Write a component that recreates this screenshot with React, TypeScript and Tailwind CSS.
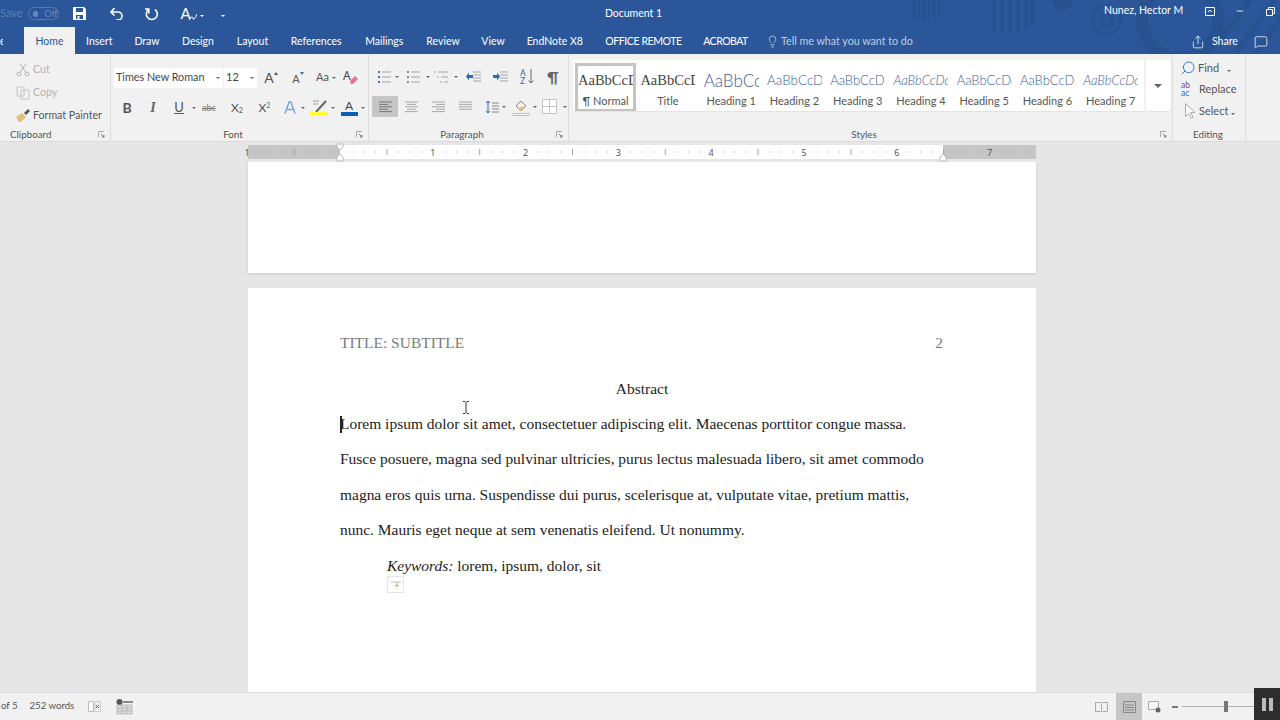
import type { ReactNode } from "react"
import { Lightbulb, MessageSquare, Share, Search, Minus } from "lucide-react"

const tabs = [
  { name: "Insert", cls: "w-[48.500px]" },
  { name: "Draw", cls: "w-[47px]" },
  { name: "Design", cls: "w-[55px]" },
  { name: "Layout", cls: "w-[54px]" },
  { name: "References", cls: "w-[73.500px]" },
  { name: "Mailings", cls: "w-[62.500px]" },
  { name: "Review", cls: "w-[55px]" },
  { name: "View", cls: "w-[45px]" },
  { name: "EndNote X8", cls: "w-[78.500px]" },
  { name: "OFFICE REMOTE", cls: "w-[99px] tracking-[-0.4px]" },
  { name: "ACROBAT", cls: "w-[65px] tracking-[-0.5px]" },
]

const gallery = [
  { label: "Title", sample: "AaBbCcDdEe", cls: "font-['Liberation_Serif',serif] text-[14.500px] text-[#444]" },
  { label: "Heading 1", sample: "AaBbCcDd", cls: "text-[17px] font-light text-[#3a6098]" },
  { label: "Heading 2", sample: "AaBbCcDdEe", cls: "text-[13.500px] font-light text-[#3a6098]" },
  { label: "Heading 3", sample: "AaBbCcDdEe", cls: "text-[13px] font-light text-[#3f6290]" },
  { label: "Heading 4", sample: "AaBbCcDdEe", cls: "text-[13px] font-light italic text-[#3f6290]" },
  { label: "Heading 5", sample: "AaBbCcDdEe", cls: "text-[13px] font-light text-[#3f6290]" },
  { label: "Heading 6", sample: "AaBbCcDdEe", cls: "text-[13px] font-light text-[#3f6290]" },
  { label: "Heading 7", sample: "AaBbCcDdEe", cls: "text-[13px] font-light italic text-[#3f6290]" },
]

function Caret({ color = "border-t-[#666]" }: { color?: string }) {
  return <span className={`inline-block w-0 h-0 border-x-[2px] border-x-transparent border-t-[2px] ${color}`} />
}

// fixed width slot so the ribbon icons keep their spacing
function Slot({ w, children }: { w: string; children: ReactNode }) {
  return <div className={`${w} h-[21px] flex items-center justify-center shrink-0`}>{children}</div>
}

function Launcher() {
  return (
    <svg width="7" height="7" viewBox="0 0 7 7" className="absolute right-[5px] bottom-[3px]">
      <path d="M.5 6V.5H6" fill="none" stroke="#aaa" />
      <path d="M3 3l3 3M6 4v2H4" fill="none" stroke="#777" />
    </svg>
  )
}

function GroupLabel({ children, inset = "pr-[13px]" }: { children: ReactNode; inset?: string }) {
  return <div className={`absolute left-0 right-0 bottom-0 text-center text-[9.800px] leading-[13px] text-[#555] ${inset}`}>{children}</div>
}

function Lines({ kind }: { kind: "left" | "center" | "right" | "justify" }) {
  const rows = {
    left: [[0, 13], [0, 9], [0, 13], [0, 9], [0, 13]],
    center: [[0, 13], [2, 11], [0, 13], [2, 11], [0, 13]],
    right: [[0, 13], [4, 13], [0, 13], [4, 13], [0, 13]],
    justify: [[0, 13], [0, 13], [0, 13], [0, 13]],
  }[kind]
  return (
    <svg width="13" height="12" viewBox="0 0 13 12">
      {rows.map((r, i) => (
        <rect key={i} x={r[0]} y={i * 2.4 + 0.5} width={r[1] - r[0]} height="1" fill={kind === "left" ? "#777" : "#a8a8a8"} />
      ))}
    </svg>
  )
}

function ListIcon({ numbered }: { numbered?: boolean }) {
  return (
    <svg width="14" height="14" viewBox="0 0 14 14">
      {[2, 7, 12].map((y) => (
        <g key={y}>
          <rect x="1" y={y - 1} width="2" height="2" fill={numbered ? "#888" : "#3f6fb0"} />
          <rect x="5" y={y - 0.5} width="9" height="1" fill="#a5a5a5" />
        </g>
      ))}
    </svg>
  )
}

function IndentIcon({ flip }: { flip?: boolean }) {
  return (
    <svg width="15" height="11" viewBox="0 0 15 11">
      <path d="M7 1h8M7 4h8M7 7h8M7 10h8" stroke="#a5a5a5" />
      {flip ? <path d="M0 4h4V1.500L7 5.500 4 9.500V7H0z" fill="#2b6cb8" /> : <path d="M7 4H3V1.500L0 5.500l3 4V7h4z" fill="#2b6cb8" />}
    </svg>
  )
}

function RibbonFont() {
  return (
    <div className="relative w-[258px] shrink-0 h-full border-r border-[#dcdcdc] pt-[13px] pl-[3px] flex flex-col">
      <div className="flex items-center">
        <div className="w-[109px] h-[20px] bg-white flex items-center justify-between pl-[2px] pr-[3px] text-[10.800px] text-[#444]">
          <span>Times New Roman</span>
          <Caret />
        </div>
        <div className="w-[33px] h-[20px] ml-px bg-white flex items-center justify-between pl-[2px] pr-[3px] text-[11px] text-[#444]">
          <span>12</span>
          <Caret />
        </div>
        <Slot w="w-[26px] ml-[1px]">
          <span className="text-[14px] text-[#555]">A</span>
          <span className="w-0 h-0 mb-[9px] border-x-[2px] border-x-transparent border-b-[3px] border-b-[#555]" />
        </Slot>
        <Slot w="w-[28px]">
          <span className="text-[11px] text-[#555] mt-[3px]">A</span>
          <span className="w-0 h-0 mb-[9px] border-x-[2px] border-x-transparent border-t-[3px] border-t-[#3f6fb0]" />
        </Slot>
        <Slot w="w-[26px] gap-[3px] ml-[1px]">
          <span className="text-[11px] text-[#555]">Aa</span>
          <Caret />
        </Slot>
        <Slot w="w-[24px]">
          <svg width="16" height="17" viewBox="0 0 16 17">
            <text x="0" y="11" fontSize="12" fill="#444" fontFamily="Noto Sans">A</text>
            <path d="M7 12l5-5 3 3-5 5H8z" fill="#e0758d" />
          </svg>
        </Slot>
      </div>
      <div className="flex items-center mt-[9px]">
        <Slot w="w-[26px]"><span className="text-[14px] font-bold text-[#555]">B</span></Slot>
        <Slot w="w-[26px]"><span className="text-[14px] font-['Liberation_Serif',serif] font-bold italic text-[#666]">I</span></Slot>
        <Slot w="w-[26px]"><span className="text-[13px] underline text-[#555]">U</span></Slot>
        <Slot w="w-[3px]"><Caret /></Slot>
        <Slot w="w-[28px]"><span className="text-[9px] line-through text-[#777]">abc</span></Slot>
        <Slot w="w-[28px]"><span className="text-[12px] text-[#555]">X<sub className="text-[7px]">2</sub></span></Slot>
        <Slot w="w-[27px]"><span className="text-[12px] text-[#555]">X<sup className="text-[7px] text-[#3f6fb0]">2</sup></span></Slot>
        <Slot w="w-[24px]">
          <svg width="12" height="13" viewBox="0 0 12 13"><path d="M1 12.500L5 1h2l4 11.500M3 8.500h6" fill="none" stroke="#7aa5dc" strokeWidth="1.500" /></svg>
        </Slot>
        <Slot w="w-[2px]"><Caret /></Slot>
        <Slot w="w-[26px] ml-[2px]">
          <div className="flex flex-col items-center">
            <svg width="15" height="12" viewBox="0 0 15 12"><path d="M4 12l10-11" stroke="#666" strokeWidth="2" /><path d="M1 1h6M1 4h5" stroke="#999" /></svg>
            <div className="w-[18px] h-[4px] bg-[#ffff33]" />
          </div>
        </Slot>
        <Slot w="w-[1px]"><Caret /></Slot>
        <Slot w="w-[26px] ml-[3px]">
          <div className="flex flex-col items-center">
            <span className="text-[12px] leading-[12px] text-[#444]">A</span>
            <div className="w-[17px] h-[4px] bg-[#0a5fb0]" />
          </div>
        </Slot>
        <Slot w="w-[1px]"><Caret /></Slot>
      </div>
      <GroupLabel>Font</GroupLabel>
      <Launcher />
    </div>
  )
}

function RibbonParagraph() {
  return (
    <div className="relative w-[200px] shrink-0 h-full border-r border-[#dcdcdc] pt-[12px] flex flex-col">
      <div className="flex items-center pl-[6px] h-[21px]">
        <Slot w="w-[18px]"><ListIcon /></Slot>
        <Slot w="w-[8px]"><Caret /></Slot>
        <Slot w="w-[22px] ml-px"><ListIcon numbered /></Slot>
        <Slot w="w-[7px]"><Caret /></Slot>
        <Slot w="w-[20px]">
          <svg width="14" height="14" viewBox="0 0 14 14"><path d="M0 2h2M4 2h10M3 7h2M7 7h7M6 12h2M10 12h4" stroke="#a5a5a5" /></svg>
        </Slot>
        <Slot w="w-[9px]"><Caret /></Slot>
        <Slot w="w-[26px]"><IndentIcon /></Slot>
        <Slot w="w-[28px]"><IndentIcon flip /></Slot>
        <Slot w="w-[26px]">
          <svg width="15" height="17" viewBox="0 0 15 17">
            <text x="0" y="8" fontSize="9" fill="#2b6cb8" fontFamily="Noto Sans">A</text>
            <text x="0" y="16" fontSize="9" fill="#2b6cb8" fontFamily="Noto Sans">Z</text>
            <path d="M11 1v14M8.500 12.500L11 15l2.500-2.500" fill="none" stroke="#666" />
          </svg>
        </Slot>
        <Slot w="w-[26px]"><span className="text-[16px] font-bold text-[#666]">¶</span></Slot>
      </div>
      <div className="flex items-center mt-[9px] h-[21px] pl-[3px]">
        <Slot w="w-[26px] !h-[21px] bg-[#c6c6c6]"><Lines kind="left" /></Slot>
        <Slot w="w-[27px]"><Lines kind="center" /></Slot>
        <Slot w="w-[27px]"><Lines kind="right" /></Slot>
        <Slot w="w-[27px]"><Lines kind="justify" /></Slot>
        <Slot w="w-[22px] ml-[2px]">
          <svg width="14" height="14" viewBox="0 0 14 14"><path d="M3 1v12M1 3l2-2 2 2M1 11l2 2 2-2" fill="none" stroke="#2b6cb8" /><path d="M7 3h7M7 6h7M7 9h7M7 12h7" stroke="#888" /></svg>
        </Slot>
        <Slot w="w-[1px]"><Caret /></Slot>
        <Slot w="w-[26px] ml-[4px]">
          <svg width="18" height="18" viewBox="0 0 18 18"><path d="M4 8l5-5 5 5-5 5z" fill="none" stroke="#888" /><path d="M9 9l5-1-5 5-3-3z" fill="#e8c07a" /><rect x="1" y="15.500" width="16" height="2" fill="#fff" stroke="#bbb" /></svg>
        </Slot>
        <Slot w="w-[1px]"><Caret /></Slot>
        <Slot w="w-[29px]">
          <svg width="15" height="15" viewBox="0 0 15 15"><path d="M.5.500h14v14H.5zM7.500.5v14M.5 7.500h14" fill="#fff" stroke="#c4c4c4" /></svg>
        </Slot>
        <Slot w="w-[1px]"><Caret /></Slot>
      </div>
      <GroupLabel>Paragraph</GroupLabel>
      <Launcher />
    </div>
  )
}

function RibbonStyles() {
  return (
    <div className="relative w-[604px] shrink-0 h-full border-r border-[#dcdcdc] pt-[6px] pl-[4px]">
      <div className="flex h-[52px] gap-[2px]">
        <div className="w-[571px] h-[52px] bg-white border-b border-[#e4e4e4] flex overflow-hidden">
          <div className="ml-[2px] mt-[3px] w-[61.250px] h-[49px] shrink-0 border-[3px] border-[#c4c4c4] flex flex-col items-center overflow-hidden">
            <div className="w-full overflow-hidden whitespace-nowrap text-center h-[28px] leading-[28px] font-['Liberation_Serif',serif] text-[14.500px] text-[#444]">AaBbCcDdEe</div>
            <div className="text-[11px] leading-[14px] text-[#555]">¶ Normal</div>
          </div>
          {gallery.map((g) => (
            <div key={g.label} className="w-[63.250px] shrink-0 flex flex-col items-center pt-[7px] overflow-hidden">
              <div className={`w-[55px] overflow-hidden whitespace-nowrap h-[27px] leading-[27px] ${g.cls}`}>{g.sample}</div>
              <div className="text-[11px] leading-[14px] text-[#555]">{g.label}</div>
            </div>
          ))}
        </div>
        <div className="w-[24px] h-[52px] bg-white border-b border-[#e4e4e4] flex items-center justify-center">
          <span className="w-0 h-0 border-x-[4px] border-x-transparent border-t-[4px] border-t-[#666]" />
        </div>
      </div>
      <GroupLabel>Styles</GroupLabel>
      <Launcher />
    </div>
  )
}

function RibbonEditing() {
  return (
    <div className="relative w-[73px] shrink-0 h-full border-r border-[#dcdcdc] pt-[3px] text-[11px] text-[#555]">
      <div className="flex items-center h-[22px] pl-[7px]">
        <Search size={16} strokeWidth={1.500} color="#3f78c0" className="-scale-x-100" />
        <span className="ml-[2px]">Find</span>
        <span className="ml-[8px]"><Caret /></span>
      </div>
      <div className="flex items-center h-[22px] -mt-[1px] pl-[8px]">
        <div className="w-[15px] flex flex-col text-[8.500px] leading-[8px] text-[#6a4a9c]">
          <span>ab</span>
          <span className="text-[#2b6cb8] -mr-[3px]">ac</span>
        </div>
        <span className="ml-[3px]">Replace</span>
      </div>
      <div className="flex items-center h-[22px] pl-[12px]">
        <svg width="11" height="16" viewBox="0 0 11 16"><path d="M.5.500v13l3-3 2.500 5 2-1-2.500-5h4.500z" fill="#fff" stroke="#aaa" /></svg>
        <span className="ml-[3px]">Select</span>
        <span className="ml-[3px]"><Caret /></span>
      </div>
      <GroupLabel inset="pr-[2px]">Editing</GroupLabel>
    </div>
  )
}

function Ruler() {
  const ticks = []
  for (let i = -7; i < 60; i++) {
    const x = 92 + (i * 92.8) / 8
    if (i % 8 === 0) continue
    ticks.push(<rect key={i} x={x} y={i % 4 === 0 ? 4 : 6.500} width="1" height={i % 4 === 0 ? 6 : 1} fill="#a0a0a0" />)
  }
  return (
    <div className="h-[20px] shrink-0 bg-[#e6e6e6] pt-[3px] pl-[248px]">
      <div className="relative w-[788px] h-[14px] flex">
        <div className="w-[92px] bg-[#c6c6c6]" />
        <div className="w-[603px] bg-white" />
        <div className="w-[93px] bg-[#c6c6c6]" />
        <svg width="800" height="20" viewBox="0 0 800 20" className="absolute left-[-4px] top-0 overflow-visible">
          <g transform="translate(4 0)">
            {ticks}
            {["1", "1", "2", "3", "4", "5", "6", "7"].map((n, i) => (
              <text key={i} x={i === 0 ? -1 : 92 + i * 92.8} y="10.500" fontSize="9" textAnchor="middle" fill="#555" fontFamily="Noto Sans">
                {n}
              </text>
            ))}
            <path d="M89 -1h6v3l-3 3-3-3z" fill="#fff" stroke="#bbb" />
            <path d="M92 9l3 3v4h-6v-4z" fill="#fff" stroke="#bbb" />
            <path d="M695 9l3 3v4h-6v-4z" fill="#fff" stroke="#bbb" />
          </g>
        </svg>
      </div>
    </div>
  )
}

export default function App() {
  return (
    <div className="w-[1280px] h-[720px] overflow-hidden flex flex-col bg-[#e6e6e6] font-['Lato',sans-serif] relative">
      {/* Title bar + tabs */}
      <div className="relative h-[54px] shrink-0 bg-[#2b579a] text-white overflow-hidden">
        <svg width="380" height="54" viewBox="0 0 380 54" className="absolute right-0 top-0" fill="none" stroke="#28528f">
          <path d="M14 0v20M19 0v20M24 0v22M29 0v22M34 0v22M39 0v20" strokeWidth="2" />
          <path d="M94 0v32M102 0v32M110 0v32M118 0v32M126 0v28M132 0v24" strokeWidth="4" />
          <circle cx="163" cy="0" r="10" fill="#28528f" />
          <circle cx="207" cy="20" r="6" strokeWidth="3" />
          <circle cx="207" cy="20" r="14" strokeWidth="3" />
          <circle cx="280" cy="20" r="38" strokeWidth="12" />
          <path d="M350 0l-30 40M375 0l-40 54M395 0l-40 54" strokeWidth="6" />
        </svg>
        <div className="relative h-[27px] flex items-center text-[11px]">
          <span className="ml-0 text-white/25">Save</span>
          <div className="ml-[5px] w-[31px] h-[13px] rounded-full border border-white/20 flex items-center pl-[4px] gap-[6px]">
            <span className="w-[6px] h-[6px] rounded-full bg-white/30" />
            <span className="text-[9px] text-white/30">Off</span>
          </div>
          <svg width="13" height="13" viewBox="0 0 13 13" className="ml-[14px]">
            <path d="M0 0h11l2 2v11H0z" fill="#fff" />
            <path d="M3 1h7v4H3zM3 8h7v4H3z" fill="#2b579a" />
            <path d="M4.500 9h2v3h-2z" fill="#fff" />
          </svg>
          <svg width="13" height="13" viewBox="0 0 13 13" fill="none" stroke="#fff" strokeWidth="1.600" className="ml-[24px]">
            <path d="M1 5h7a4 4 0 0 1 0 8H6M4.500 1L1 5l3.500 3.500" />
          </svg>
          <svg width="14" height="14" viewBox="0 0 14 14" fill="none" stroke="#fff" strokeWidth="1.600" className="ml-[22px]">
            <path d="M4 2.300a5.500 5.500 0 1 0 6 .2M3.800 6.500V2H0" />
          </svg>
          <span className="ml-[22px] text-[15px] leading-none">A</span>
          <svg width="8" height="8" viewBox="0 0 8 8" fill="none" stroke="#fff" className="-ml-[2px] mt-[6px]"><path d="M0 7c2-1 1-3 3-3s0 3 2 2 2-4 3-5" /></svg>
          <span className="ml-[3px]"><Caret color="border-t-white" /></span>
          <span className="ml-[17px]"><Caret color="border-t-white" /></span>
          <div className="absolute left-0 right-0 top-[1px] h-[26px] flex items-center justify-center pr-[13px] text-[10.500px]">Document 1</div>
          <div className="absolute left-[1104px] top-0 h-[22px] flex items-center whitespace-nowrap text-[10.500px]">Nunez, Hector M</div>
          <svg width="10" height="9" viewBox="0 0 10 9" fill="none" stroke="#fff" className="absolute left-[1205px] top-[7px]"><path d="M.5.500h9v8h-9zM3 5l2-2 2 2" /></svg>
          <Minus size={10} className="absolute left-[1235px] top-[6px]" />
          <svg width="9" height="9" viewBox="0 0 9 9" fill="none" stroke="#fff" className="absolute left-[1266px] top-[7px]"><path d="M2.500 2V.5h6v6H7M.5 2.500h6v6h-6z" /></svg>
        </div>
        <div className="relative h-[27px] flex text-[10.500px]">
          <span className="w-[3px] overflow-hidden h-full pt-[2px] flex items-center text-white">e</span>
          <div className="ml-[21px] w-[51px] h-full pt-[2px] bg-[#f1f1f1] text-[#2b579a] flex items-center justify-center">Home</div>
          {tabs.map((t) => (
            <div key={t.name} className={`${t.cls} h-full pt-[2px] flex items-center justify-center whitespace-nowrap`}>{t.name}</div>
          ))}
          <Lightbulb size={13} strokeWidth={1.300} className="ml-[8px] mt-[8px] opacity-80" />
          <span className="ml-[2px] h-full pt-[2px] flex items-center text-white/70 text-[10.700px]">Tell me what you want to do</span>
          <Share size={14} strokeWidth={1.300} className="absolute left-[1191px] top-[8px]" />
          <span className="absolute left-[1212px] h-full pt-[2px] flex items-center">Share</span>
          <MessageSquare size={14} strokeWidth={1.300} className="absolute left-[1254px] top-[8px]" />
        </div>
      </div>

      {/* Ribbon */}
      <div className="h-[88px] shrink-0 bg-[#f1f1f1] flex border-b border-[#dadada]">
        <div className="relative w-[111px] shrink-0 h-full border-r border-[#dcdcdc] pt-[4px] text-[10.600px]">
          <div className="flex items-center h-[23px] pl-[16px] text-[#b4b4b4]">
            <svg width="14" height="14" viewBox="0 0 14 14" fill="none" stroke="#b4b4b4"><circle cx="3" cy="11" r="2" /><circle cx="11" cy="11" r="2" /><path d="M4 9.500L10 1M10 9.500L4 1" /></svg>
            <span className="ml-[3px]">Cut</span>
          </div>
          <div className="flex items-center h-[23px] pl-[16px] text-[#b4b4b4]">
            <svg width="14" height="14" viewBox="0 0 14 14" fill="none" stroke="#c4c4c4"><path d="M1 1h7v9H1zM5 4h8v9H5z" /></svg>
            <span className="ml-[3px]">Copy</span>
          </div>
          <div className="flex items-center h-[23px] pl-[16px] text-[#555]">
            <svg width="14" height="13" viewBox="0 0 14 13"><path d="M0 8l6-4 4 4-5 5H3z" fill="#e3bf7d" /><path d="M8 4l4-4 2 2-4 4z" fill="#555" /></svg>
            <span className="ml-[3px] whitespace-nowrap">Format Painter</span>
          </div>
          <div className="absolute left-[10px] bottom-0 text-[9.800px] leading-[13px] text-[#555]">Clipboard</div>
          <Launcher />
        </div>
        <RibbonFont />
        <RibbonParagraph />
        <RibbonStyles />
        <RibbonEditing />
      </div>

      <Ruler />

      {/* Document */}
      <div className="flex-1 min-h-0 overflow-hidden pl-[248px] font-['Liberation_Serif',serif] text-[15.480px] text-[#1c1c1c]">
        <div className="w-[788px] h-[111px] bg-white shadow-[0_1px_3px_rgba(0,0,0,0.12)]" />
        <div className="relative w-[788px] h-[600px] mt-[15px] bg-white pt-[43px] px-[92px]">
          <div className="flex justify-between leading-[24px] text-[#7b7b7b]">
            <span>TITLE: SUBTITLE</span>
            <span className="mr-[1px]">2</span>
          </div>
          <div className="text-center leading-[35.500px] mt-[16.400px] -mb-[1px]">Abstract</div>
          <div className="leading-[35.500px] whitespace-nowrap">
            <div>Lorem ipsum dolor sit amet, consectetuer adipiscing elit. Maecenas porttitor congue massa.</div>
            <div>Fusce posuere, magna sed pulvinar ultricies, purus lectus malesuada libero, sit amet commodo</div>
            <div>magna eros quis urna. Suspendisse dui purus, scelerisque at, vulputate vitae, pretium mattis,</div>
            <div>nunc. Mauris eget neque at sem venenatis eleifend. Ut nonummy.</div>
            <div className="pl-[47px]"><em>Keywords:</em> lorem, ipsum, dolor, sit</div>
          </div>
          <div className="ml-[47px] mt-[-7px] w-[17px] h-[17px] bg-white border border-[#e4e4e4] flex items-center justify-center">
            <svg width="12" height="12" viewBox="0 0 12 12"><path d="M1 3h10" stroke="#bbb" /><path d="M7 4L5 7h2L6 10l3-4H7l1-2z" fill="#e0a94a" /></svg>
          </div>
          {/* text caret */}
          <div className="absolute left-[92px] top-[128px] w-[2px] h-[17px] bg-[#222]" />
          <svg width="8" height="13" viewBox="0 0 8 13" className="absolute left-[214px] top-[113px]" fill="none" stroke="#333">
            <path d="M1 .5h2l1 1 1-1h2M4 1.500v10M1 12.500h2l1-1 1 1h2" />
          </svg>
        </div>
      </div>

      {/* Status bar */}
      <div className="h-[28px] shrink-0 bg-[#f1f1f1] border-t border-[#dedede] flex items-center text-[9.600px] text-[#555] relative">
        <span className="ml-[1px]">of 5</span>
        <span className="ml-[12px]">252 words</span>
        <svg width="13" height="11" viewBox="0 0 13 11" className="ml-[14px]"><path d="M.5.500h5v10h-5z" fill="#fff" stroke="#bbb" /><path d="M7 .5h5.500v10H7z" fill="none" stroke="#ccc" /><path d="M8 4l3 3M11 4L8 7" stroke="#666" /></svg>
        <svg width="17" height="16" viewBox="0 0 17 16" className="ml-[15px]"><circle cx="3.500" cy="3" r="3" fill="#555" /><path d="M7 3h10" stroke="#666" strokeWidth="1.500" /><path d="M1 6h15v9H1zM1 9h15M1 12h15M6 6v9M11 6v9" fill="#ddd" stroke="#aaa" strokeWidth=".7" /></svg>
        <div className="ml-auto flex items-center h-full">
          <svg width="13" height="10" viewBox="0 0 13 10" fill="none" stroke="#aaa"><path d="M.5.500h5l1 1 1-1h5v9h-5l-1-.5-1 .5h-5zM6.500 1.500v8" /></svg>
          <div className="ml-[8px] w-[26px] h-full bg-[#c6c6c6] flex items-center justify-center">
            <svg width="13" height="12" viewBox="0 0 13 12" fill="none" stroke="#888"><path d="M.5.500h12v11H.5zM2 4h9M2 6.500h9M2 9h9" /></svg>
          </div>
          <svg width="13" height="12" viewBox="0 0 13 12" className="ml-[6px]"><path d="M.5.500h10v8H.5z" fill="#f6f6f6" stroke="#aaa" /><circle cx="10" cy="9" r="2.500" fill="#666" /></svg>
          <div className="ml-[11px] w-[6px] h-[2px] bg-[#777]" />
          <div className="ml-[4px] w-[72px] h-px bg-[#b4b4b4] relative">
            <div className="absolute left-[42px] top-[-5px] w-[4px] h-[11px] bg-[#777]" />
          </div>
          <div className="w-[26px]" />
        </div>
      </div>

      {/* video pause overlay */}
      <div className="absolute right-0 bottom-0 w-[26px] h-[32px] bg-[#2e2e2e] flex items-center justify-center gap-[3px]">
        <div className="w-[4px] h-[13px] bg-[#bbb]" />
        <div className="w-[4px] h-[13px] bg-[#bbb]" />
      </div>
    </div>
  )
}
